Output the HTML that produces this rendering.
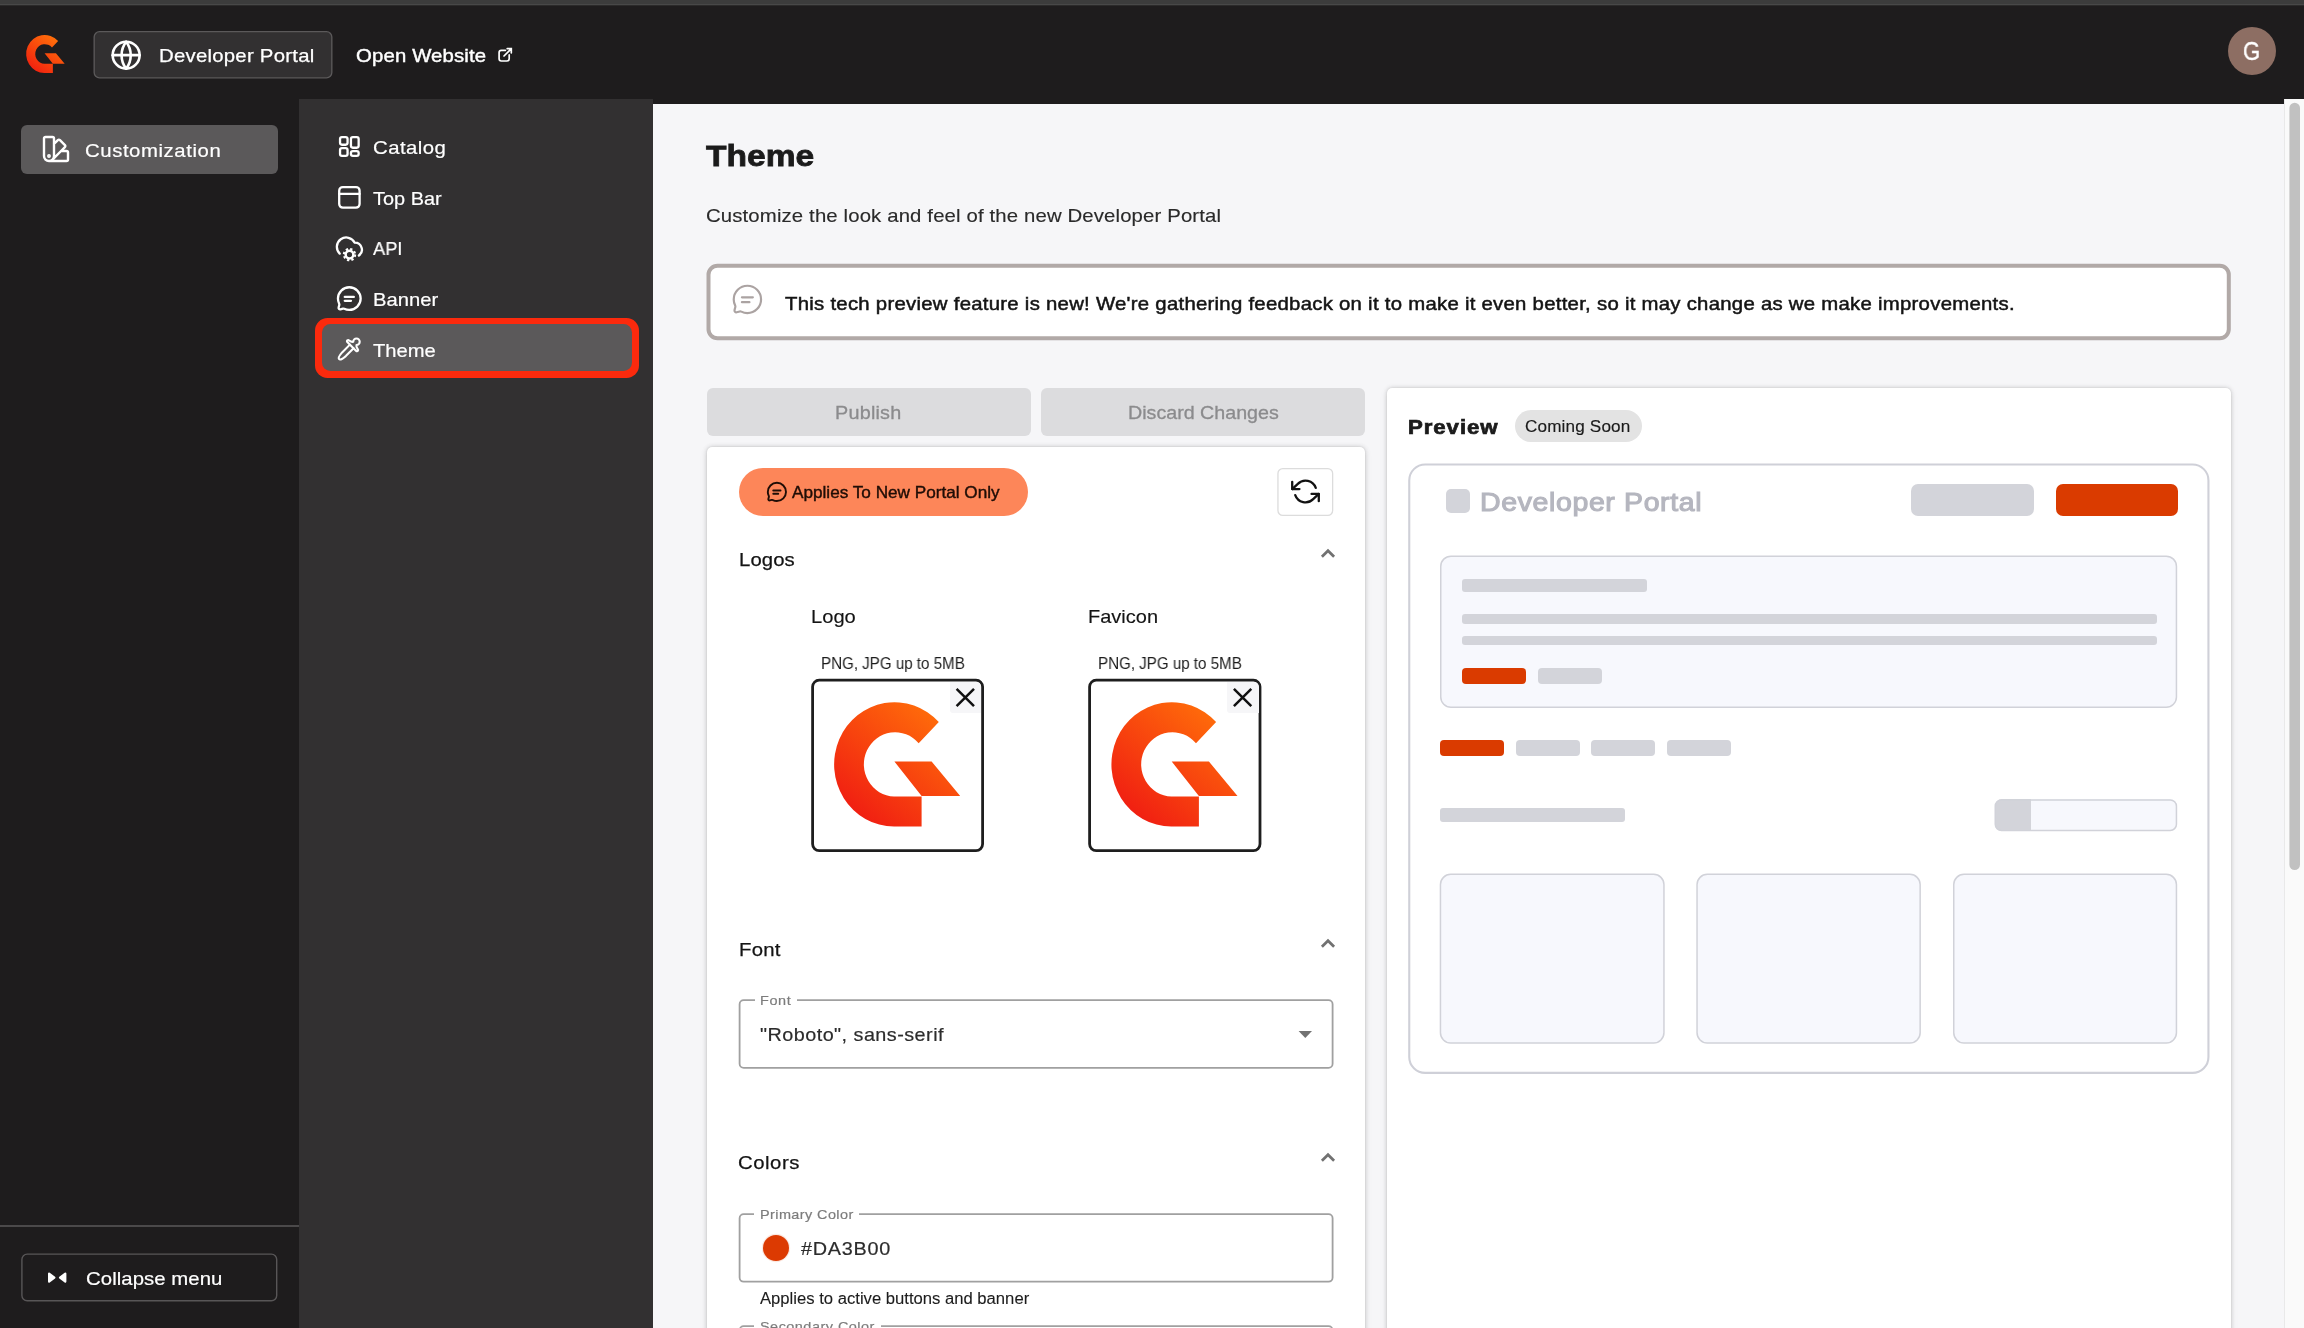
<!DOCTYPE html>
<html lang="en">
<head>
<meta charset="utf-8">
<title>Theme - Developer Portal</title>
<style>
html,body{margin:0;padding:0;}
body{width:2304px;height:1328px;background:#1e1c1d;font-family:"Liberation Sans",sans-serif;}
#root{position:relative;width:2304px;height:1328px;overflow:hidden;background:#1e1c1d;}
.a{position:absolute;}
.t{position:absolute;white-space:nowrap;line-height:normal;will-change:transform;}
svg{position:absolute;overflow:visible;}
.bar{position:absolute;background:#d3d4da;border-radius:3px;}
.or{background:#da3b00;}
.card{position:absolute;background:#f7f8fd;border:1.5px solid #d1d2d9;border-radius:11px;box-sizing:border-box;}
.fs{position:absolute;border:1.9px solid #a1a1a1;border-radius:6px;box-sizing:border-box;}
.gap{position:absolute;background:#fff;height:4px;}
</style>
</head>
<body>
<div id="root">
<!-- top strip -->
<div class="a" style="left:0;top:0;width:2304px;height:4px;background:#3c3c3c;"></div>
<div class="a" style="left:0;top:4px;width:2304px;height:1px;background:#484848;"></div>
<div class="a" style="left:0;top:5px;width:2304px;height:1px;background:#2b2a2a;"></div>

<!-- secondary sidebar -->
<div class="a" style="left:299px;top:99px;width:354px;height:1229px;background:#323031;"></div>
<!-- main bg -->
<div class="a" style="left:653px;top:104px;width:1632px;height:1224px;background:#f6f6f8;"></div>
<!-- scrollbar -->
<div class="a" style="left:2284px;top:99px;width:20px;height:1229px;background:#fafafa;box-shadow:inset 1px 0 0 #e9e9e9;"></div>
<svg style="left:0;top:0;" width="2304" height="1328"><rect x="2289.4" y="102.8" width="10.6" height="767.2" rx="5.3" fill="#c1c1c1"/></svg>

<!-- header: logo -->
<svg style="left:25.5px;top:34.9px;" width="40" height="39" viewBox="833.6 702.2 131 127.6">
  <defs><linearGradient id="gg" x1="0.12" y1="0.9" x2="0.75" y2="0.1"><stop offset="0" stop-color="#f0200f"/><stop offset="1" stop-color="#ff6d0a"/></linearGradient></defs>
  <use href="#gshape" fill="url(#gg)"/>
</svg>
<!-- Developer Portal button -->
<svg style="left:0;top:0;" width="2304" height="1328"><rect x="94.17" y="31.68" width="237.65" height="46.15" rx="5.33" fill="#323031" stroke="#5b595a" stroke-width="1.35"/></svg>
<svg style="left:110.4px;top:38.8px;" width="32.3" height="32.3" viewBox="0 0 24 24" fill="none" stroke="#fff" stroke-width="1.95" stroke-linecap="round" stroke-linejoin="round"><circle cx="12" cy="12" r="10"/><line x1="2" y1="12" x2="22" y2="12"/><path d="M12 2a16.4 16.4 0 0 1 3.4 10 16.4 16.4 0 0 1-3.4 10 16.4 16.4 0 0 1-3.4-10 16.4 16.4 0 0 1 3.4-10z"/></svg>
<!-- ext link -->
<svg style="left:0;top:0;" width="2304" height="110" fill="none" stroke="#fff" stroke-width="1.7" stroke-linecap="round" stroke-linejoin="round"><path d="M505.4 50.3H501.3a2.2 2.2 0 0 0-2.2 2.2V58.8a2.2 2.2 0 0 0 2.2 2.2H507a2.2 2.2 0 0 0 2.2-2.2V54.9"/><path d="M504 56L511.2 48.8M507.2 48.7H511.3V52.8" stroke-linejoin="miter"/></svg>
<!-- avatar -->
<div class="a" style="left:2228px;top:26.6px;width:48px;height:48px;border-radius:50%;background:#8d6e63;"></div>

<!-- sidebar 1 -->
<div class="a" style="left:21px;top:125px;width:256.5px;height:48.5px;border-radius:6px;background:#5b595a;"></div>
<svg style="left:39.7px;top:133px;" width="32" height="32" viewBox="0 0 24 24" fill="none" stroke="#fff" stroke-width="1.8" stroke-linecap="round" stroke-linejoin="round"><path d="M4.098 19.902a3.75 3.75 0 0 0 5.304 0l6.401-6.402M6.75 21A3.75 3.75 0 0 1 3 17.25V4.125C3 3.504 3.504 3 4.125 3h5.25c.621 0 1.125.504 1.125 1.125v4.072M6.75 21a3.75 3.75 0 0 0 3.75-3.75V8.197M6.75 21h13.125c.621 0 1.125-.504 1.125-1.125v-5.25c0-.621-.504-1.125-1.125-1.125h-4.072M10.5 8.197l2.88-2.88c.438-.439 1.15-.439 1.59 0l3.712 3.713c.44.44.44 1.152 0 1.59l-2.879 2.88"/><circle cx="6.75" cy="17.25" r="0.55" fill="#fff"/></svg>
<div class="a" style="left:0;top:1225.3px;width:299px;height:1.5px;background:#4b494a;"></div>
<svg style="left:0;top:0;" width="2304" height="1328"><rect x="21.90" y="1254.10" width="254.80" height="46.70" rx="5.30" fill="none" stroke="#585657" stroke-width="1.4"/></svg>
<svg style="left:0;top:1260px;" width="100" height="40" viewBox="0 1260 100 40" fill="#fff" stroke="#fff" stroke-width="2.2" stroke-linejoin="round"><path d="M49.1 1273.6L54.4 1277.6L49.1 1281.6Z"/><path d="M65.3 1273.6L60 1277.6L65.3 1281.6Z"/></svg>

<!-- sidebar 2 icons -->
<svg style="left:0;top:0;" width="700" height="400" fill="none" stroke="#fff" stroke-width="2.3" stroke-linecap="round" stroke-linejoin="round">
  <!-- catalog -->
  <rect x="340.05" y="137.05" width="7.5" height="7.7" rx="1.9"/>
  <rect x="350.95" y="137.05" width="7.7" height="10.7" rx="1.9"/>
  <rect x="340.05" y="148.15" width="7.5" height="7.7" rx="1.9"/>
  <rect x="350.95" y="151.15" width="7.7" height="4.7" rx="1.9"/>
  <!-- top bar -->
  <rect x="339.2" y="187.1" width="20.4" height="20.6" rx="3.6"/>
  <line x1="339.2" y1="193.9" x2="359.6" y2="193.9"/>
  <!-- api cloud -->
  <path d="M339.7 253.6A9.4 9.4 0 1 1 354.7 242.7A7.04 7.04 0 0 1 358.9 255.5"/>
  <circle cx="349.5" cy="254.6" r="3.85" stroke-width="2.5"/>
  <circle cx="349.5" cy="254.6" r="5.7" stroke-width="2" stroke-dasharray="2.3 2.176" stroke-linecap="butt"/>
  <!-- banner bubble -->
  <g transform="translate(335.68 284.98) scale(1.135)"><use href="#bubble" stroke-width="2.03"/></g>
  <!-- theme pipette placeholder below -->
</svg>

<!-- selected Theme item + red annotation -->
<div class="a" style="left:315px;top:317.8px;width:324px;height:60.2px;border-radius:12.5px;background:#fb2a0d;"></div>
<div class="a" style="left:321.8px;top:324.4px;width:310.4px;height:46.9px;border-radius:8.5px;background:#5b595a;"></div>
<svg style="left:0;top:0;" width="700" height="400" fill="none" stroke="#fff" stroke-width="2.3" stroke-linecap="round" stroke-linejoin="round">
  <g transform="translate(338.3 359.9) rotate(-45)" stroke-width="2.1">
    <path d="M19 -2.6L8 -2.6Q1.1 -2.1 1.1 0Q1.1 2.1 8 2.6L19 2.6"/>
    <path d="M19 -6.3L19 6.3C19 7.8 21.4 7.8 21.4 6Q21.8 3.2 23.4 2.3A3.25 3.25 0 1 0 23.4 -2.3Q21.8 -3.2 21.4 -6C21.4 -7.8 19 -7.8 19 -6.3Z"/>
  </g>
</svg>

<!-- alert -->
<svg style="left:0;top:0;" width="2304" height="1328"><rect x="708.50" y="265.70" width="1520.30" height="72.60" rx="9.00" fill="#fff" stroke="#b1a9a7" stroke-width="4.0"/></svg>
<svg style="left:731.2px;top:283.2px;" width="32.8" height="32.8" viewBox="0 0 24 24" fill="none" stroke="#aba3a2" stroke-width="1.6" stroke-linecap="round" stroke-linejoin="round"><use href="#bubble"/></svg>

<!-- buttons -->
<div class="a" style="left:707px;top:388px;width:323.5px;height:48px;border-radius:6px;background:#dcdcde;"></div>
<div class="a" style="left:1041.3px;top:388px;width:324px;height:48px;border-radius:6px;background:#dcdcde;"></div>

<!-- left panel -->
<div class="a" style="left:707px;top:446.7px;width:658.2px;height:900px;border-radius:5px;background:#fff;box-shadow:0 2px 8px rgba(0,0,0,.07),0 0 5px rgba(0,0,0,.17),0 0 1.5px rgba(0,0,0,.12);"></div>
<div class="a" style="left:738.75px;top:468px;width:289.5px;height:48px;border-radius:24px;background:#fd8659;"></div>
<svg style="left:766px;top:480.9px;" width="21.8" height="21.8" viewBox="0 0 24 24" fill="none" stroke="#1f0d06" stroke-width="2.1" stroke-linecap="round" stroke-linejoin="round"><use href="#bubble"/></svg>
<svg style="left:0;top:0;" width="2304" height="1328"><rect x="1277.95" y="468.65" width="54.70" height="46.70" rx="4.85" fill="#fff" stroke="#dcdcdc" stroke-width="1.3"/></svg>
<svg style="left:1290.8px;top:477px;" width="29" height="29" viewBox="0 0 24 24" fill="none" stroke="#111" stroke-width="1.9" stroke-linecap="round" stroke-linejoin="round"><polyline points="1 4 1 10 7 10"/><polyline points="23 20 23 14 17 14"/><path d="M20.49 9A9 9 0 0 0 5.64 5.64L1 10m22 4l-4.64 4.36A9 9 0 0 1 3.51 15"/></svg>
<!-- chevrons -->
<svg style="left:0;top:0;" width="2304" height="1328" fill="none" stroke="#717171" stroke-width="2.75" stroke-linejoin="miter">
  <path d="M1321.9 556.8L1328 550.7L1334.1 556.8"/>
  <path d="M1321.9 946.8L1328 940.7L1334.1 946.8"/>
  <path d="M1321.9 1160.8L1328 1154.7L1334.1 1160.8"/>
</svg>

<!-- logo boxes -->
<svg style="left:0;top:0;" width="2304" height="1328"><rect x="812.60" y="680.20" width="170.00" height="170.40" rx="6.60" fill="#fff" stroke="#1e1e1e" stroke-width="2.8"/></svg>
<svg style="left:0;top:0;" width="2304" height="1328"><rect x="1089.60" y="680.20" width="170.40" height="170.40" rx="6.60" fill="#fff" stroke="#1e1e1e" stroke-width="2.8"/></svg>
<div class="a" style="left:949.5px;top:681.6px;width:31.7px;height:31px;border-radius:0 5px 0 3px;background:#f6f6f8;"></div>
<div class="a" style="left:1226.7px;top:681.6px;width:31.9px;height:31px;border-radius:0 5px 0 3px;background:#f6f6f8;"></div>
<svg style="left:0;top:0;" width="2304" height="1328">
  <defs>
    <linearGradient id="g1" gradientUnits="userSpaceOnUse" x1="850" y1="815" x2="935" y2="712"><stop offset="0" stop-color="#f01c12"/><stop offset="1" stop-color="#ff6c0a"/></linearGradient>
    <path id="gshape" d="M938.8 722.1A60.4 62.2 0 1 0 894 826.6L921.6 826.4L921.6 796.6L894 796.6A31.3 32.2 0 1 1 918.7 743.2ZM894.4 761.6H931.6L960.2 795.9H921.6Z"/>
    <g id="bubble"><path d="M12 22C17.5228 22 22 17.5228 22 12C22 6.47715 17.5228 2 12 2C6.47715 2 2 6.47715 2 12C2 13.5997 2.37562 15.1116 3.04346 16.4525C3.22094 16.8088 3.28001 17.2161 3.17712 17.6006L2.58151 19.8267C2.32295 20.793 3.20701 21.677 4.17335 21.4185L6.39939 20.8229C6.78393 20.72 7.19121 20.7791 7.54753 20.9565C8.88837 21.6244 10.4003 22 12 22Z"/><path d="M8 10.5H16"/><path d="M8 14H13.5"/></g>
  </defs>
  <g style="filter:blur(0.75px)"><use href="#gshape" fill="url(#g1)"/>
  <use href="#gshape" fill="url(#g1)" transform="translate(277.3 0)"/></g>
  <g stroke="#111" stroke-width="2.5" stroke-linecap="butt" fill="none">
    <path d="M956.6 688.8L974 706.2M974 688.8L956.6 706.2"/>
    <path d="M1233.9 688.8L1251.3 706.2M1251.3 688.8L1233.9 706.2"/>
  </g>
  <!-- dropdown arrow -->
  <path d="M1298.6 1031.1H1312L1305.3 1037.9Z" fill="#727272"/>
</svg>

<!-- fieldsets -->
<svg style="left:0;top:0;" width="2304" height="1328"><rect x="739.60" y="1000.10" width="593.00" height="67.80" rx="4.10" fill="none" stroke="#a0a0a0" stroke-width="1.8"/></svg>
<div class="gap" style="left:754.5px;top:998px;width:42.5px;"></div>
<svg style="left:0;top:0;" width="2304" height="1328"><rect x="739.60" y="1214.10" width="593.00" height="67.60" rx="4.10" fill="none" stroke="#a0a0a0" stroke-width="1.8"/></svg>
<div class="gap" style="left:754.3px;top:1212px;width:105.2px;"></div>
<svg style="left:0;top:0;" width="2304" height="1328"><rect x="739.60" y="1326.10" width="593.00" height="67.60" rx="4.10" fill="none" stroke="#a0a0a0" stroke-width="1.8"/></svg>
<div class="gap" style="left:754.3px;top:1324px;width:126.7px;"></div>
<div class="a" style="left:762.7px;top:1234.6px;width:26.8px;height:26.8px;border-radius:50%;background:#dc3a02;box-shadow:0 0 0 1.2px #fbe9e2;"></div>

<!-- right panel -->
<div class="a" style="left:1387px;top:388px;width:844.3px;height:1000px;border-radius:5px;background:#fff;box-shadow:0 2px 8px rgba(0,0,0,.07),0 0 5px rgba(0,0,0,.17),0 0 1.5px rgba(0,0,0,.12);"></div>
<div class="a" style="left:1514.7px;top:410px;width:127.5px;height:32px;border-radius:16px;background:#e3e3e3;"></div>
<svg style="left:0;top:0;" width="2304" height="1328"><rect x="1409.25" y="464.45" width="799.20" height="608.40" rx="15.95" fill="#fff" stroke="#cfd0d8" stroke-width="2.1"/></svg>
<div class="bar" style="left:1446px;top:489.4px;width:24.3px;height:23.8px;border-radius:5px;"></div>
<div class="bar" style="left:1910.6px;top:484.3px;width:123.1px;height:32.2px;border-radius:7px;"></div>
<div class="bar or" style="left:2055.8px;top:484.3px;width:122.4px;height:32.2px;border-radius:7px;"></div>
<svg style="left:0;top:0;" width="2304" height="1328"><rect x="1440.75" y="556.15" width="735.70" height="151.10" rx="10.25" fill="#f7f8fd" stroke="#d1d2d9" stroke-width="1.5"/></svg>
<div class="bar" style="left:1461.8px;top:578.5px;width:185.7px;height:13.2px;"></div>
<div class="bar" style="left:1461.8px;top:614.2px;width:695.4px;height:9.6px;"></div>
<div class="bar" style="left:1461.8px;top:635.9px;width:695.4px;height:9.6px;"></div>
<div class="bar or" style="left:1461.8px;top:667.5px;width:64.6px;height:16.9px;border-radius:4px;"></div>
<div class="bar" style="left:1537.6px;top:667.5px;width:64.2px;height:16.9px;border-radius:4px;"></div>
<div class="bar or" style="left:1440.2px;top:739.7px;width:64.1px;height:16.5px;border-radius:4px;"></div>
<div class="bar" style="left:1515.6px;top:739.7px;width:64.1px;height:16.5px;border-radius:4px;"></div>
<div class="bar" style="left:1591.3px;top:739.7px;width:64.2px;height:16.5px;border-radius:4px;"></div>
<div class="bar" style="left:1666.7px;top:739.7px;width:64.2px;height:16.5px;border-radius:4px;"></div>
<div class="bar" style="left:1439.9px;top:808.3px;width:185.2px;height:13.7px;"></div>
<div class="a" style="left:1994.5px;top:799.2px;width:182.7px;height:32px;border-radius:7px;overflow:hidden;background:#f7f8fd;"><div style="width:36.5px;height:100%;background:#d3d4da;"></div></div><svg style="left:0;top:0;" width="2304" height="1328"><rect x="1995.25" y="799.95" width="181.20" height="30.50" rx="6.25" fill="none" stroke="#d1d2d9" stroke-width="1.5"/></svg>
<svg style="left:0;top:0;" width="2304" height="1328"><rect x="1440.45" y="874.35" width="223.50" height="168.70" rx="10.25" fill="#f7f8fd" stroke="#d1d2d9" stroke-width="1.5"/></svg>
<svg style="left:0;top:0;" width="2304" height="1328"><rect x="1697.05" y="874.35" width="223.10" height="168.70" rx="10.25" fill="#f7f8fd" stroke="#d1d2d9" stroke-width="1.5"/></svg>
<svg style="left:0;top:0;" width="2304" height="1328"><rect x="1953.75" y="874.35" width="222.70" height="168.70" rx="10.25" fill="#f7f8fd" stroke="#d1d2d9" stroke-width="1.5"/></svg>

<div class="t" style="left:158.83px;top:45.20px;font-size:19px;font-weight:400;color:#ffffff;letter-spacing:0.237px;transform:scaleX(1.0700);transform-origin:0 0;-webkit-text-stroke:0.25px #ffffff;">Developer Portal</div>
<div class="t" style="left:355.73px;top:44.90px;font-size:19px;font-weight:400;color:#ffffff;letter-spacing:0.143px;transform:scaleX(1.0700);transform-origin:0 0;-webkit-text-stroke:0.42px #ffffff;">Open Website</div>
<div class="t" style="left:2243.44px;top:36.70px;font-size:25px;font-weight:400;color:#ffffff;letter-spacing:0.000px;transform:scaleX(0.8800);transform-origin:0 0;-webkit-text-stroke:0.4px #ffffff;">G</div>
<div class="t" style="left:84.73px;top:140.00px;font-size:19px;font-weight:400;color:#ffffff;letter-spacing:0.539px;transform:scaleX(1.0700);transform-origin:0 0;-webkit-text-stroke:0.2px #ffffff;">Customization</div>
<div class="t" style="left:86.23px;top:1268.00px;font-size:19px;font-weight:400;color:#ffffff;letter-spacing:0.064px;transform:scaleX(1.0700);transform-origin:0 0;-webkit-text-stroke:0.2px #ffffff;">Collapse menu</div>
<div class="t" style="left:372.83px;top:137.00px;font-size:19px;font-weight:400;color:#ffffff;letter-spacing:0.445px;transform:scaleX(1.0700);transform-origin:0 0;-webkit-text-stroke:0.2px #ffffff;">Catalog</div>
<div class="t" style="left:372.83px;top:187.50px;font-size:19px;font-weight:400;color:#ffffff;letter-spacing:0.000px;transform:scaleX(1.0483);transform-origin:0 0;-webkit-text-stroke:0.2px #ffffff;">Top Bar</div>
<div class="t" style="left:373.33px;top:238.30px;font-size:19px;font-weight:400;color:#ffffff;letter-spacing:0.000px;transform:scaleX(0.9615);transform-origin:0 0;-webkit-text-stroke:0.2px #ffffff;">API</div>
<div class="t" style="left:373.33px;top:289.10px;font-size:19px;font-weight:400;color:#ffffff;letter-spacing:0.000px;transform:scaleX(1.0630);transform-origin:0 0;-webkit-text-stroke:0.2px #ffffff;">Banner</div>
<div class="t" style="left:372.83px;top:339.60px;font-size:19px;font-weight:400;color:#ffffff;letter-spacing:0.000px;transform:scaleX(1.0626);transform-origin:0 0;-webkit-text-stroke:0.2px #ffffff;">Theme</div>
<div class="t" style="left:706.10px;top:139.20px;font-size:30px;font-weight:700;color:#1b1b1b;letter-spacing:0.000px;transform:scaleX(1.1184);transform-origin:0 0;-webkit-text-stroke:0.8px #1b1b1b;">Theme</div>
<div class="t" style="left:706.43px;top:205.10px;font-size:19px;font-weight:400;color:#2a2a2a;letter-spacing:0.132px;transform:scaleX(1.0700);transform-origin:0 0;-webkit-text-stroke:0.15px #2a2a2a;">Customize the look and feel of the new Developer Portal</div>
<div class="t" style="left:785.43px;top:292.60px;font-size:19px;font-weight:400;color:#141414;letter-spacing:0.254px;transform:scaleX(1.0700);transform-origin:0 0;-webkit-text-stroke:0.5px #141414;">This tech preview feature is new! We're gathering feedback on it to make it even better, so it may change as we make improvements.</div>
<div class="t" style="left:835.45px;top:402.30px;font-size:18.5px;font-weight:400;color:#8b8b8d;letter-spacing:0.207px;transform:scaleX(1.0700);transform-origin:0 0;-webkit-text-stroke:0.3px #8b8b8d;">Publish</div>
<div class="t" style="left:1127.85px;top:402.30px;font-size:18.5px;font-weight:400;color:#8b8b8d;letter-spacing:0.000px;transform:scaleX(1.0628);transform-origin:0 0;-webkit-text-stroke:0.3px #8b8b8d;">Discard Changes</div>
<div class="t" style="left:791.80px;top:483.10px;font-size:16.5px;font-weight:400;color:#1f0d06;letter-spacing:0.000px;transform:scaleX(1.0400);transform-origin:0 0;-webkit-text-stroke:0.4px #1f0d06;">Applies To New Portal Only</div>
<div class="t" style="left:738.93px;top:549.25px;font-size:19px;font-weight:400;color:#141414;letter-spacing:0.079px;transform:scaleX(1.0700);transform-origin:0 0;-webkit-text-stroke:0.25px #141414;">Logos</div>
<div class="t" style="left:810.83px;top:606.40px;font-size:19px;font-weight:400;color:#141414;letter-spacing:0.000px;transform:scaleX(1.0606);transform-origin:0 0;-webkit-text-stroke:0.15px #141414;">Logo</div>
<div class="t" style="left:1087.83px;top:606.40px;font-size:19px;font-weight:400;color:#141414;letter-spacing:0.000px;transform:scaleX(1.0528);transform-origin:0 0;-webkit-text-stroke:0.15px #141414;">Favicon</div>
<div class="t" style="left:821.12px;top:654.75px;font-size:16px;font-weight:400;color:#1c1c1c;letter-spacing:0.000px;transform:scaleX(0.9455);transform-origin:0 0;">PNG, JPG up to 5MB</div>
<div class="t" style="left:1098.42px;top:654.75px;font-size:16px;font-weight:400;color:#1c1c1c;letter-spacing:0.000px;transform:scaleX(0.9455);transform-origin:0 0;">PNG, JPG up to 5MB</div>
<div class="t" style="left:738.93px;top:938.60px;font-size:19px;font-weight:400;color:#141414;letter-spacing:0.203px;transform:scaleX(1.0700);transform-origin:0 0;-webkit-text-stroke:0.25px #141414;">Font</div>
<div class="t" style="left:759.89px;top:993.20px;font-size:13.5px;font-weight:400;color:#7c7c7c;letter-spacing:0.572px;transform:scaleX(1.0700);transform-origin:0 0;-webkit-text-stroke:0.2px #7c7c7c;">Font</div>
<div class="t" style="left:760.05px;top:1024.10px;font-size:18.5px;font-weight:400;color:#2c2c2c;letter-spacing:0.434px;transform:scaleX(1.0700);transform-origin:0 0;-webkit-text-stroke:0.2px #2c2c2c;">"Roboto", sans-serif</div>
<div class="t" style="left:738.33px;top:1152.10px;font-size:19px;font-weight:400;color:#141414;letter-spacing:0.504px;transform:scaleX(1.0700);transform-origin:0 0;-webkit-text-stroke:0.25px #141414;">Colors</div>
<div class="t" style="left:759.89px;top:1207.40px;font-size:13.5px;font-weight:400;color:#7c7c7c;letter-spacing:0.386px;transform:scaleX(1.0700);transform-origin:0 0;-webkit-text-stroke:0.2px #7c7c7c;">Primary Color</div>
<div class="t" style="left:800.71px;top:1238.80px;font-size:18px;font-weight:400;color:#2c2c2c;letter-spacing:0.677px;transform:scaleX(1.1000);transform-origin:0 0;-webkit-text-stroke:0.2px #2c2c2c;">#DA3B00</div>
<div class="t" style="left:759.82px;top:1290.00px;font-size:16px;font-weight:400;color:#1c1c1c;letter-spacing:0.000px;transform:scaleX(1.0399);transform-origin:0 0;-webkit-text-stroke:0.1px #1c1c1c;">Applies to active buttons and banner</div>
<div class="t" style="left:759.89px;top:1318.70px;font-size:13.5px;font-weight:400;color:#7c7c7c;letter-spacing:0.450px;transform:scaleX(1.0700);transform-origin:0 0;-webkit-text-stroke:0.2px #7c7c7c;">Secondary Color</div>
<div class="t" style="left:1407.82px;top:416.10px;font-size:19.5px;font-weight:700;color:#1b1b1b;letter-spacing:0.809px;transform:scaleX(1.1400);transform-origin:0 0;-webkit-text-stroke:0.7px #1b1b1b;">Preview</div>
<div class="t" style="left:1525.12px;top:417.90px;font-size:16px;font-weight:400;color:#1a1a1a;letter-spacing:0.144px;transform:scaleX(1.0700);transform-origin:0 0;-webkit-text-stroke:0.15px #1a1a1a;">Coming Soon</div>
<div class="t" style="left:1480.20px;top:487.25px;font-size:26.6px;font-weight:400;color:#b5b6bf;letter-spacing:0.599px;transform:scaleX(1.0700);transform-origin:0 0;-webkit-text-stroke:1.1px #b5b6bf;">Developer Portal</div>

</div>
</body>
</html>
